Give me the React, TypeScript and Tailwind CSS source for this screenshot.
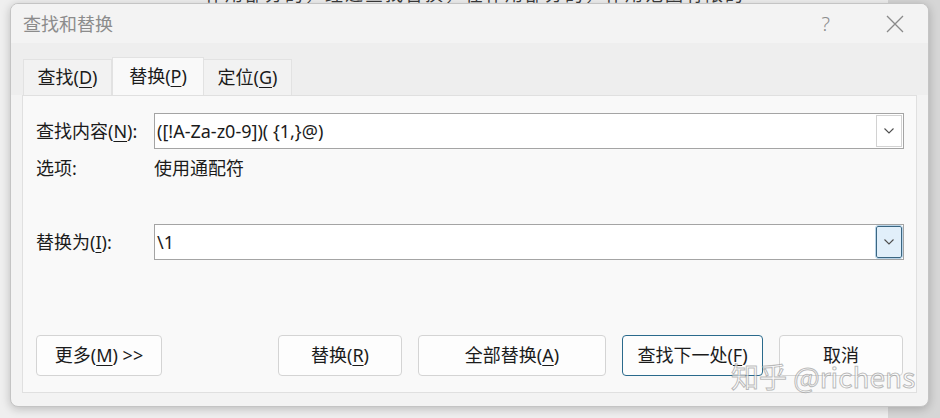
import React from "react";

const Chevron = () => (
  <svg width="12" height="8" viewBox="0 0 12 8" fill="none">
    <path d="M1.5 1.5 L6 6 L10.5 1.5" stroke="#505050" strokeWidth="1.1" />
  </svg>
);

const Key = ({ children }: { children: React.ReactNode }) => (
  <span className="underline underline-offset-[3px] decoration-[1px]">{children}</span>
);

function Btn({
  children,
  w,
  primary = false,
}: {
  children: React.ReactNode;
  w: string;
  primary?: boolean;
}) {
  return (
    <div
      className={`${w} h-[41px] flex items-center justify-center rounded-[4px] bg-[#fdfdfd] text-[18px] text-[#1b1b1b] ${
        primary ? "border border-[#2a6a8c]" : "border border-[#d4d4d4]"
      }`}
    >
      {children}
    </div>
  );
}

export default function App() {
  return (
    <div className="relative w-[940px] h-[418px] overflow-hidden bg-[#e8e8e8] font-['Noto_Sans','Noto_Sans_CJK_SC',sans-serif]">
      {/* document behind */}
      <div className="absolute left-0 top-0 w-[888px] h-[418px] bg-[#efefef]" />
      <div className="absolute right-0 top-0 w-[52px] h-[418px] bg-[#d6d6d6]" />
      <div className="absolute left-[205px] top-[-19px] text-[18px] text-[#3a3a3a] tracking-[2px] whitespace-nowrap">
        作用部分的，经过查找替换，在作用部分的，作用范围有限的
      </div>

      <div className="relative ml-[10px] mt-[3px] w-[919px] h-[404px] rounded-[8px] border border-[#c4c4c4] bg-[#f3f3f3] shadow-[0_2px_10px_rgba(0,0,0,0.22)] overflow-hidden flex flex-col">
        {/* title bar */}
        <div className="h-[39px] shrink-0 flex items-center pl-[12px] pr-[24px] bg-[#f3f3f3]">
          <span className="text-[18px] text-[#8c8c8c] leading-none">查找和替换</span>
          <span className="ml-auto text-[20px] text-[#8c8c8c] leading-none font-light">?</span>
          <svg className="ml-[56px]" width="18" height="18" viewBox="0 0 18 18">
            <path d="M1 1 L17 17 M17 1 L1 17" stroke="#8a8a8a" strokeWidth="1.3" />
          </svg>
        </div>

        {/* tabs strip */}
        <div className="h-[52px] shrink-0 bg-[#eeeeee] flex items-end pl-[12px]">
          <div className="w-[89px] h-[36px] border border-b-0 border-[#e2e2e2] bg-[#f2f2f2] flex items-center justify-center text-[18px] text-[#1b1b1b]">
            查找(<Key>D</Key>)
          </div>
          <div className="w-[92px] h-[38px] border border-b-0 border-[#e2e2e2] bg-[#f9f9f9] flex items-center justify-center text-[18px] text-[#1b1b1b]">
            替换(<Key>P</Key>)
          </div>
          <div className="w-[88px] h-[36px] border border-b-0 border-l-0 border-[#e2e2e2] bg-[#f2f2f2] flex items-center justify-center text-[18px] text-[#1b1b1b]">
            定位(<Key>G</Key>)
          </div>
        </div>

        {/* panel */}
        <div className="ml-[11px] w-[895px] h-[298px] border border-[#e0e0e0] bg-[#f9f9f9] pl-[13px] pr-[12px] pt-[17px] text-[18px] text-[#1b1b1b]">
          <div className="flex items-center h-[36px]">
            <div className="w-[118px] whitespace-nowrap">
              查找内容(<Key>N</Key>):
            </div>
            <div className="flex-1 h-[36px] border border-[#a4a4a4] bg-white flex items-center pl-[2px] pr-[1px]">
              <span className="flex-1 whitespace-nowrap">([!A-Za-z0-9])( {"{1,}"}@)</span>
              <div className="w-[26px] h-[32px] border border-[#d2d2d2] bg-white flex items-center justify-center">
                <Chevron />
              </div>
            </div>
          </div>
          <div className="flex items-center h-[36px] mt-[1px]">
            <div className="w-[118px]">选项:</div>
            <div>使用通配符</div>
          </div>
          <div className="flex items-center h-[36px] mt-[38px]">
            <div className="w-[118px] whitespace-nowrap">
              替换为(<Key>I</Key>):
            </div>
            <div className="flex-1 h-[36px] border border-[#a4a4a4] bg-white flex items-center pl-[2px] pr-[1px]">
              <span className="flex-1">\1</span>
              <div className="w-[26px] h-[32px] rounded-[2px] border border-[#3a6682] bg-[#e1effa] flex items-center justify-center outline outline-1 outline-[#b9d4e8]">
                <Chevron />
              </div>
            </div>
          </div>

          <div className="flex items-center mt-[75px]">
            <Btn w="w-[126px]">
              更多(<Key>M</Key>)&nbsp;&gt;&gt;
            </Btn>
            <div className="ml-[116px]">
              <Btn w="w-[124px]">
                替换(<Key>R</Key>)
              </Btn>
            </div>
            <div className="ml-[16px]">
              <Btn w="w-[188px]">
                全部替换(<Key>A</Key>)
              </Btn>
            </div>
            <div className="ml-[16px]">
              <Btn w="w-[141px]" primary>
                查找下一处(<Key>F</Key>)
              </Btn>
            </div>
            <div className="ml-[16px]">
              <Btn w="w-[124px]">取消</Btn>
            </div>
          </div>
        </div>
      </div>

      {/* watermark */}
      <div className="absolute left-[731px] top-[362px] text-[28px] leading-none whitespace-nowrap text-[rgba(255,255,255,0.7)] [-webkit-text-stroke:1px_rgba(120,120,120,0.5)] font-['Noto_Sans_CJK_SC',sans-serif]">
        知乎 @richens
      </div>
    </div>
  );
}
